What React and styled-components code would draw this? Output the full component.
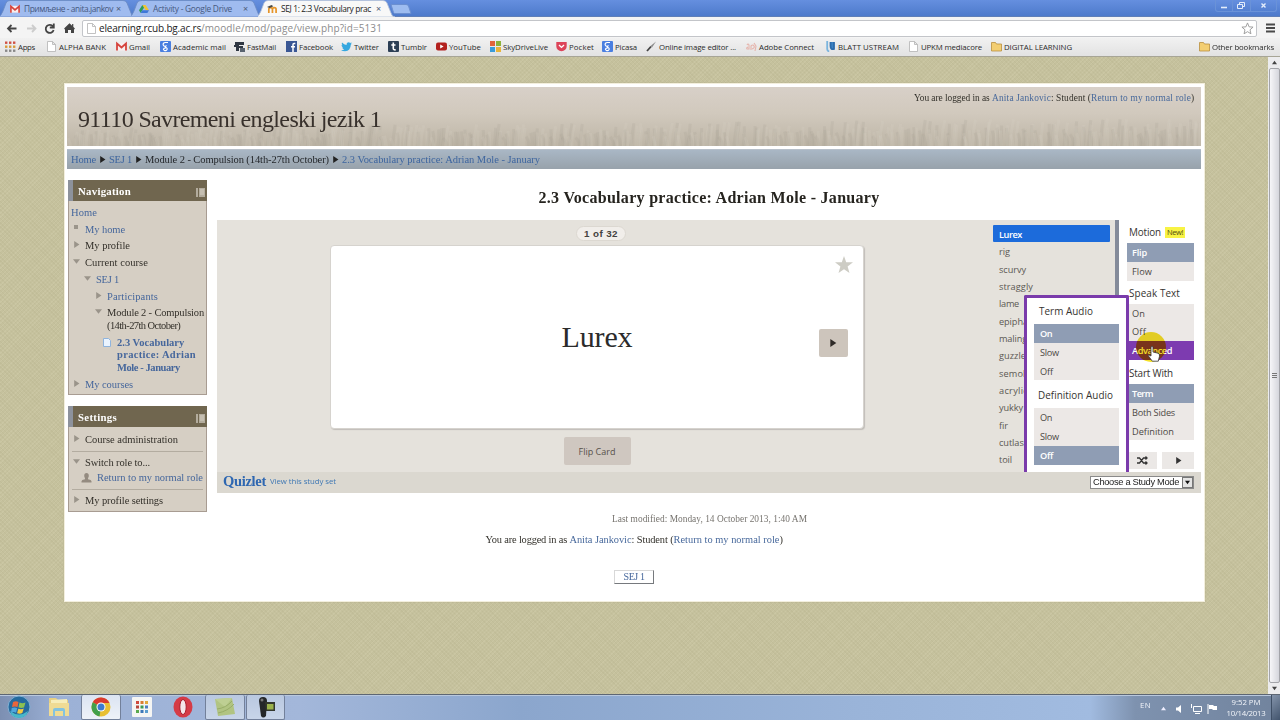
import React, { useLayoutEffect, useRef } from "react";
import styled, { createGlobalStyle } from "styled-components";

const SERIF = `Georgia, "Liberation Serif", serif`;
const UI = `"Segoe UI", "Open Sans", sans-serif`;

const GlobalStyle = createGlobalStyle`
  * { box-sizing: border-box; }
  body {
    margin: 0;
    overflow: hidden;
    font-family: ${SERIF};
    color: #33312b;
  }
`;

const Label = styled.span`
  display: inline-block;
  white-space: pre;
  flex: none;
`;

// tracks the letters in or out so that the label is exactly w wide
function Fit({ w, children }) {
  const ref = useRef(null);
  useLayoutEffect(() => {
    const el = ref.current;
    el.style.letterSpacing = "0px";
    const natural = el.getBoundingClientRect().width;
    el.style.letterSpacing = `${(w - natural) / el.textContent.length}px`;
  }, [w, children]);
  return <Label ref={ref}>{children}</Label>;
}

const Screen = styled.div`
  width: 1280px;
  height: 720px;
  display: flex;
  flex-direction: column;
  overflow: hidden;
`;

/* ---------- browser chrome ---------- */

const TabStrip = styled.div`
  height: 17px;
  flex: none;
  display: flex;
  background: linear-gradient(#658fdf, #4d7acb);
  border-bottom: 1px solid #5f7fb8;
  font-family: ${UI};
`;

const TabBox = styled.div`
  position: relative;
  width: ${(p) => p.$w}px;
  height: 17px;
  display: flex;
  align-items: center;
  padding-left: ${(p) => p.$pad}px;
  font-size: 8.4px;
  color: ${(p) => (p.$active ? "#222" : "#46597f")};
  z-index: ${(p) => (p.$active ? 2 : 1)};
`;

const TabShape = styled.svg`
  position: absolute;
  left: 0;
  top: 0;
  z-index: -1;
`;

const TabText = styled.div`
  margin-left: 4px;
  flex: 1;
  line-height: 16px;
`;

const TabClose = styled.span`
  width: 15px;
  font-size: 9px;
  line-height: 15px;
  color: #4c5a74;
`;

const NewTab = styled.svg`
  margin: 4px 0 0 -2px;
`;

const WindowButtons = styled.div`
  margin-left: auto;
  margin-right: 3px;
  width: 62px;
  height: 12px;
  display: flex;
  border: 1px solid #6a92d8;
  border-top: 0;
  border-radius: 0 0 3px 3px;
`;

const Toolbar = styled.div`
  height: 21px;
  flex: none;
  display: flex;
  align-items: center;
  background: #f4f4f4;
  padding: 0 5px;
`;

const Omnibox = styled.div`
  flex: 1;
  height: 17px;
  margin: 1px 9px 0 1px;
  display: flex;
  align-items: center;
  background: #fff;
  border: 1px solid #c3c5c9;
  border-radius: 2px;
  padding: 0 2px 0 3px;
  font-family: ${UI};
  font-size: 10px;
  color: #222;

  em {
    font-style: normal;
    color: #8b8b8b;
  }
`;

const Url = styled.div`
  flex: 1;
  margin-left: 2px;
  line-height: 15px;
`;

const BookmarkBar = styled.div`
  height: 19px;
  flex: none;
  display: flex;
  align-items: center;
  background: linear-gradient(#f1f1f1, #e2e2e2);
  border-bottom: 1px solid #a7a596;
  padding: 0 0 1px 5px;
  font-family: ${UI};
  font-size: 7.8px;
  color: #2b2b2b;
`;

const BookmarkItem = styled.div`
  width: ${(p) => p.$w}px;
  flex: none;
  display: flex;
  align-items: center;
  line-height: 12px;
  margin-left: ${(p) => (p.$last ? "auto" : 0)};

  svg {
    flex: none;
    margin-right: 2px;
  }
`;

/* ---------- page ---------- */

const Viewport = styled.div`
  flex: 1;
  min-height: 0;
  display: flex;
`;

const Page = styled.div`
  flex: 1;
  padding: 26px 0 0 64px;
  background-color: #c5c19d;
  background-image: repeating-linear-gradient(45deg, rgba(160, 155, 115, 0.12) 0 1px, transparent 1px 3px),
    repeating-linear-gradient(-45deg, rgba(235, 230, 200, 0.14) 0 1px, transparent 1px 3px);
`;

const Scrollbar = styled.div`
  width: 12px;
  display: flex;
  flex-direction: column;
  justify-content: space-between;
  align-items: center;
  background: #ececee;
`;

const ScrollArrow = styled.div`
  width: 12px;
  height: 11px;
  display: flex;
  align-items: center;
  justify-content: center;
`;

const Thumb = styled.div`
  flex: 1;
  width: 11px;
  border: 1px solid #a3a4a9;
  border-radius: 2px;
  background: linear-gradient(90deg, #f6f6f8, #d5d6dc);
  display: flex;
  align-items: center;
  justify-content: center;
`;

const Sheet = styled.div`
  width: 1141px;
  height: 519px;
  background: #fff;
  border: 1px solid #f3efdd;
  box-shadow: 0 0 1px #aaa68a;
  padding: 3px 3px 0 2px;
  display: flex;
  flex-direction: column;
`;

const Header = styled.header`
  position: relative;
  height: 59px;
  width: 1134px;
  flex: none;
  display: flex;
  justify-content: space-between;
  background: linear-gradient(#d8d0c8, #d1c9bd 45%, #bdb5a6);
`;

const Grass = styled.svg`
  position: absolute;
  left: 0;
  bottom: 0;
`;

const CourseName = styled.h1`
  position: relative;
  margin: 18px 0 0 11px;
  font-size: 24px;
  line-height: 28px;
  font-weight: 400;
  color: #38312c;
`;

const LoginInfo = styled.div`
  position: relative;
  margin: ${(p) => p.$margin || 0};
  font-size: ${(p) => p.$size}px;
  line-height: 14px;
  white-space: nowrap;
  color: #33312b;
  text-align: center;
`;

const Link = styled.a`
  color: #48699c;
`;

const Breadcrumb = styled.nav`
  height: 20px;
  width: 1134px;
  flex: none;
  margin-top: 3px;
  display: flex;
  align-items: center;
  padding-left: 4px;
  border-top: 1px solid #b6bfc9;
  background: linear-gradient(#a9b7c5, #98a2ab);
  font-size: 10.5px;
  color: #24272b;

  a {
    color: #3d659f;
  }

  svg {
    margin: 0 3px;
  }
`;

const Columns = styled.div`
  display: flex;
  padding: 11px 0 0 1px;
`;

const Sidebar = styled.aside`
  width: 139px;
  flex: none;
`;

const Block = styled.section`
  height: ${(p) => p.$h}px;
  margin-bottom: 11px;
  border: 1px solid #a89c92;
  background: #d6cfc4;
  font-size: 10.5px;
  line-height: 12.7px;
`;

const BlockTitle = styled.h2`
  height: 21px;
  margin: -1px -1px ${(p) => p.$gap}px;
  padding: 0 2px 0 5px;
  display: flex;
  align-items: center;
  justify-content: space-between;
  border-left: 5px solid #8d929c;
  background: #70664f;
  color: #fff;
  font-size: 10.8px;
  line-height: 18px;

  svg {
    margin-top: 4px;
  }
`;

const TreeRow = styled.div`
  display: flex;
  align-items: flex-start;
  padding: ${(p) => (p.$tight ? 1 : 2)}px 0 2px ${(p) => p.$indent}px;
  color: #33302a;
  font-weight: ${(p) => (p.$bold ? 700 : 400)};
  a {
    color: #46679c;
  }
  svg {
    flex: none;
    margin: 1px 5px 0 -1px;
  }
`;

const TreeText = styled.div`
  display: flex;
  flex-direction: column;
`;

const Rule = styled.div`
  height: 1px;
  margin: ${(p) => p.$m};
  background: #b3aca0;
`;

const Main = styled.main`
  width: 984px;
  margin-left: 10px;
  display: flex;
  flex-direction: column;
`;

const Title = styled.h3`
  margin: 9px 0 13px;
  font-size: 16px;
  line-height: 18px;
  text-align: center;
  color: #25231e;
`;

/* ---------- flashcards ---------- */

const Flashcards = styled.div`
  position: relative;
  height: 252px;
  display: flex;
  background: #e5e2dc;
  font-family: ${UI};
`;

const Stage = styled.div`
  width: 760px;
  display: flex;
  flex-direction: column;
  align-items: center;
  padding-top: 6px;
`;

const Counter = styled.div`
  width: 50px;
  height: 15px;
  margin-left: 8px;
  border: 1px solid #dcd8d1;
  border-radius: 8px;
  background: #f1eeea;
  text-align: center;
  font: 700 9.8px/14px "Liberation Sans", Arial, sans-serif;
  color: #44423e;
`;

const Card = styled.div`
  width: 534px;
  height: 184px;
  margin-top: 4px;
  display: grid;
  grid-template-columns: 44px 1fr 44px;
  justify-items: center;
  border: 1px solid #d6d3ce;
  border-radius: 4px;
  background: #fff;
  box-shadow: 1px 1px 1px #c0bdb8;
`;

const Word = styled.div`
  align-self: center;
  font: 30px/34px ${SERIF};
  color: #2b2b2b;
`;

const CardTools = styled.div`
  width: 29px;
  margin-right: 16px;
  display: flex;
  flex-direction: column;
  align-items: flex-end;
  padding-top: 10px;
`;

const Star = styled.svg`
  margin-right: -5px;
`;

const NextButton = styled.button`
  width: 29px;
  height: 28px;
  margin-top: 55px;
  padding: 0;
  border: 0;
  border-radius: 2px;
  background: #cdc5bc;
  display: flex;
  align-items: center;
  justify-content: center;
`;

const FlipButton = styled.button`
  width: 67px;
  height: 28px;
  margin-top: 8px;
  padding: 0;
  border: 0;
  border-radius: 2px;
  background: #cfc7c0;
  font: 9px/29px ${UI};
  color: #57514b;
`;

const TermList = styled.div`
  width: 138px;
  flex: none;
  padding: 5px 5px 0 16px;
`;

const TermItem = styled.div`
  height: 17.35px;
  padding-left: 6px;
  line-height: 19px;
  font-size: 9.2px;
  font-weight: ${(p) => (p.$selected ? 600 : 400)};
  color: ${(p) => (p.$selected ? "#fff" : "#5b5853")};
  background: ${(p) => (p.$selected ? "#1c6bdb" : "transparent")};
  border-radius: 1px;
`;

const Options = styled.div`
  width: 86px;
  flex: none;
  padding: 5px 7px 0 8px;
  border-left: 4px solid #848b9a;
  background: #fff;
`;

const OptionTitle = styled.div`
  height: 14px;
  margin: ${(p) => p.$m};
  display: flex;
  align-items: center;
  font-size: 9.9px;
  line-height: 14px;
  color: #35332f;
`;

const NewBadge = styled.span`
  margin-left: 4px;
  padding: 0 2px;
  background: #f8f344;
  font-size: 7.5px;
  line-height: 11px;
  color: #4f4a10;
`;

const OptionGroup = styled.div`
  display: flex;
  flex-direction: column;
  background: #ece8e6;
`;

const Option = styled.div`
  height: 18.8px;
  padding-left: 5px;
  line-height: 20px;
  font-size: 9.2px;
  font-weight: ${(p) => (p.$tone ? 600 : 400)};
  color: ${(p) => (p.$tone ? "#fff" : "#4c4945")};
  background: ${(p) => p.$tone || "transparent"};
`;

const PlayRow = styled.div`
  display: flex;
  justify-content: space-between;
  margin-top: 12px;
`;

const PlayButton = styled.button`
  width: ${(p) => p.$w}px;
  height: 17px;
  padding: 0;
  border: 0;
  background: #ebe8e6;
  display: flex;
  align-items: center;
  justify-content: center;
`;

const AudioPopup = styled.div`
  position: absolute;
  left: 807px;
  top: 75px;
  width: 105px;
  height: 177px;
  padding: 6px 7px 0 7px;
  border: 3px solid #7a3bab;
  border-bottom: 0;
  border-radius: 2px 2px 0 0;
  background: #fff;

  ${Option} {
    padding-left: 6px;
  }
`;

const Pointer = styled.svg`
  position: absolute;
  left: 916px;
  top: 108px;

  circle {
    mix-blend-mode: multiply;
  }
`;

const QuizletBar = styled.div`
  height: 21px;
  padding: 0 7px 0 6px;
  display: flex;
  align-items: center;
  background: #dbd8d0;
  color: #3a70b8;
`;

const QuizletLogo = styled.span`
  font: 700 14.5px/18px ${SERIF};
  color: #2e67b1;
  margin-top: -4px;
`;

const StudyLink = styled.a`
  flex: 1;
  margin: -4px 0 0 4px;
  font: 7.8px/12px ${UI};
  color: #3f78b4;
`;

const StudyMode = styled.div`
  width: 104px;
  height: 13px;
  display: flex;
  align-items: center;
  justify-content: space-between;
  padding-left: 2px;
  border: 1px solid #8a8a8a;
  background: #fff;
  font: 9.3px/11px "Liberation Sans", Arial, sans-serif;
  color: #222;
`;

const SelectArrow = styled.span`
  width: 11px;
  height: 11px;
  display: flex;
  align-items: center;
  justify-content: center;
  border: 1px solid #777;
  background: #e4e4e4;
`;

const Modified = styled.div`
  margin: 19px 0 0 395px;
  font-size: 9.4px;
  line-height: 14px;
  color: #77746f;
`;

const Footer = styled.footer`
  display: flex;
  flex-direction: column;
  align-items: center;
`;

const HomeLink = styled.a`
  width: 40px;
  height: 14px;
  margin-top: 23px;
  border: 1px solid #d8d8d8;
  border-right-color: #76797d;
  border-bottom-color: #76797d;
  text-align: center;
  font-size: 10px;
  line-height: 12px;
  color: #46679c;
`;

/* ---------- taskbar ---------- */

const Taskbar = styled.div`
  height: 26px;
  flex: none;
  display: flex;
  border-top: 1px solid #5d6673;
  box-shadow: inset 0 1px 0 #b9c8dd;
  background: linear-gradient(90deg, #7c8fb2 0, #9cb1d6 60px, #a3b7da 300px, #8ba6cd 520px, #9ab4d9 860px, #a1bbe0 1090px, #7e92af 1135px, #71839d 1280px);
`;

const TaskButton = styled.div`
  width: ${(p) => p.$w}px;
  margin-right: ${(p) => (p.$open ? 1 : 2)}px;
  display: flex;
  align-items: center;
  justify-content: center;
  border: 1px solid ${(p) => (p.$open ? "#72809a" : "transparent")};
  border-top: 0;
  border-radius: 2px;
  background: ${(p) => (p.$active ? "linear-gradient(#dbe4f2, #eef2f8)" : p.$open ? "linear-gradient(#b9c8e0, #c8d5e9)" : "none")};
`;

const Tray = styled.div`
  margin-left: auto;
  display: flex;
  align-items: center;
  color: #f2f5fa;
  font: 7.8px/11px ${UI};
`;

const Language = styled.div`
  margin: -4px 10px 0 0;
`;

const TrayIcon = styled.div`
  display: flex;
  margin: 2px ${(p) => p.$gap}px 0 0;
`;

const Clock = styled.div`
  width: 50px;
  text-align: center;
`;

const ShowDesktop = styled.div`
  width: 9px;
  height: 25px;
  border-left: 1px solid #3f4f66;
  background: linear-gradient(135deg, #8494ab, #42546d);
`;

/* ---------- icons ---------- */

const icons = {
  apps: (
    <g>
      {[0, 1, 2].map((r) =>
        [0, 1, 2].map((c) => (
          <rect key={`${r}${c}`} x={c * 4} y={r * 4 + 0.5} width="2.4" height="2.4" fill={["#cf5145", "#d99a39", "#888"][r]} />
        ))
      )}
    </g>
  ),
  page: <path d="M1.5 .5h5l3 3v7h-8zM6.5.5v3h3" fill="#fff" stroke="#b3b3b3" strokeWidth=".8" />,
  gmail: (
    <g>
      <path d="M0 2h11v7.5H0z" fill="#f8eeee" />
      <path d="M1 9.5V2.5l4.5 4 4.5-4v7" fill="none" stroke="#d5433c" strokeWidth="1.8" />
    </g>
  ),
  google: (
    <g>
      <rect width="11" height="11" rx="1" fill="#4a7fe0" />
      <path d="M8 1.5H5.400a2 1.900 0 1 0 .3 3.700q-.6.9.6 1.500a1.900 1.600 0 1 1-2.900 1.400q.4-1.300 2.400-1.300" fill="none" stroke="#fff" strokeWidth="1.2" />
    </g>
  ),
  fastmail: (
    <g>
      <path d="M1 1h9v3H5v1h4v2H5v3H2V6H0V4h1z" fill="#2f3742" />
      <path d="M6 7h5v4H6z" fill="#59636f" />
    </g>
  ),
  facebook: (
    <g>
      <rect width="11" height="11" fill="#3a5794" />
      <path d="M9.3 2.5H8q-1 0-1 1V11M5 5.8h4" fill="none" stroke="#fff" strokeWidth="1.5" />
    </g>
  ),
  twitter: (
    <path d="M0 9q2 .3 3.2-.8Q1.500 8 1.200 6.500h1Q.5 5.800.5 4l1 .3Q.2 3 1 1.500 3 3.800 5.500 3.900 5.300 1.300 7.500 1.200q1 0 1.700.7l1.500-.6-1 1.400 1.300-.3-1.200 1.300Q9.600 9.800 4 10.200 1.600 10.200 0 9z" fill="#35a7df" />
  ),
  tumblr: (
    <g>
      <rect width="11" height="11" rx="1" fill="#2c3f55" />
      <path d="M5.3 1.5v6q0 1.6 2.4 1.3M3.3 4h4.2" fill="none" stroke="#fff" strokeWidth="1.6" />
    </g>
  ),
  youtube: (
    <g>
      <rect y="1.5" width="11" height="8" rx="2" fill="#b3211e" />
      <path d="M4.2 3.5v4l3.4-2z" fill="#fff" />
    </g>
  ),
  windows: (
    <g>
      <path d="M0 0h5v5H0z" fill="#e2653a" />
      <path d="M6 0h5v5H6z" fill="#8cb33a" />
      <path d="M0 6h5v5H0z" fill="#3b9cd9" />
      <path d="M6 6h5v5H6z" fill="#e9b53a" />
    </g>
  ),
  pocket: (
    <g>
      <path d="M.3 1h10.4v4.300a5.200 5 0 0 1-10.400 0z" fill="#dd4459" />
      <path d="M3 4l2.500 2.400L8 4" fill="none" stroke="#fff" strokeWidth="1.4" />
    </g>
  ),
  brush: (
    <g>
      <path d="M1 10L5 5.500" stroke="#444" strokeWidth="1.8" />
      <path d="M4.500 5L10 .5 6 6.500z" fill="#8b8b8b" />
    </g>
  ),
  adobe: <path d="M1 4q1-2 2 0v4H1q-1-1 1-2M5 9V5q2-2 3 0t-2 3M8 2l2 3-1 5" fill="none" stroke="#e6b4ac" strokeWidth="1.1" />,
  ustream: (
    <g fill="none" strokeWidth="1.8">
      <path d="M2.200 0v8q0 2 2 2.500" stroke="#7bb4dd" />
      <path d="M5.500 1v4q0 4 3.500 3V1" stroke="#2d6cac" fill="#3d83c2" />
    </g>
  ),
  folder: <path d="M.5 1.5h4l1 1.5h5v7H.5z" fill="#f3ce72" stroke="#b98f3f" strokeWidth=".8" />,
  drive: (
    <g>
      <path d="M3.700 1h3.600L11 7H7.400z" fill="#f2c330" />
      <path d="M3.700 1L0 7l1.800 3 3.700-6z" fill="#2f9c57" />
      <path d="M1.800 10h7.400L11 7H3.600z" fill="#3f78d8" />
    </g>
  ),
  moodle: (
    <g fill="none" strokeWidth="1.9">
      <path d="M2 10V6q0-2 2-2t2 2v4M6 6q0-2 2-2t2 2v4" stroke="#e69529" />
      <path d="M0 3.400L5 1l2 1.500-4 2z" fill="#4b4b45" stroke="none" />
    </g>
  ),
};

const Icon = ({ name, size = 11 }) => (
  <svg width={size} height={size} viewBox="0 0 11 11">
    {icons[name]}
  </svg>
);

const Triangle = ({ dir = "right", size = 6, fill = "#9a948a" }) => (
  <svg width={size} height={size} viewBox="0 0 6 6">
    <path d={{ right: "M1 0l4.500 3-4.500 3z", down: "M0 1h6L3 5z", up: "M0 5h6L3 1z" }[dir]} fill={fill} />
  </svg>
);

const DockIcon = () => (
  <svg width="9" height="9" viewBox="0 0 9 9">
    <path d="M0 0h2v9H0zM3 0h6v9H3z" fill="#b3ac9d" />
    <path d="M4 2h4M4 4h4M4 6h4" stroke="#d6d0c4" />
  </svg>
);

const UserIcon = () => (
  <svg width="11" height="10" viewBox="0 0 11 11" fill="#948b80">
    <ellipse cx="5.5" cy="3" rx="2.5" ry="3" />
    <path d="M0 10.5V9q0-1.300 3.800-2V5h3.400v2Q11 7.700 11 9v1.500z" />
  </svg>
);

const bookmarks = [
  ["apps", "Apps", 17, 41],
  ["page", "ALPHA BANK", 47, 70],
  ["gmail", "Gmail", 21, 44],
  ["google", "Academic mail", 53, 74],
  ["fastmail", "FastMail", 29, 52],
  ["facebook", "Facebook", 34, 55],
  ["twitter", "Twitter", 25, 47],
  ["tumblr", "Tumblr", 26, 48],
  ["youtube", "YouTube", 32, 54],
  ["windows", "SkyDriveLive", 45, 66],
  ["pocket", "Pocket", 25, 46],
  ["google", "Picasa", 22, 44],
  ["brush", "Online image editor ...", 77, 100],
  ["adobe", "Adobe Connect", 55, 79],
  ["ustream", "BLATT USTREAM", 61, 83],
  ["page", "UPKM mediacore", 61, 83],
  ["folder", "DIGITAL LEARNING", 68, 90],
];

const terms = [
  ["Lurex", 23], ["rig", 11], ["scurvy", 27], ["straggly", 34], ["lame", 20], ["epipha", 29], ["maling", 28],
  ["guzzle", 27], ["semoli", 29], ["acrylic", 29], ["yukky", 24], ["fir", 9], ["cutlass", 29], ["toil", 13],
];

// pale blades along the foot of the header
const blades = Array.from({ length: 420 }, (_, i) => {
  const rnd = Math.abs(Math.sin(i * 78.233) * 43758.5453) % 1;
  const rnd2 = Math.abs(Math.sin(i * 12.9898) * 24634.6345) % 1;
  const x = i * 2.7 + rnd * 4;
  const h = (10 + rnd2 * 18) * (0.65 + x / 3000);
  return { d: `M${x} 40q${rnd * 3 - 1} ${-h / 2} ${rnd2 * 6 - 3} ${-h}`, dark: rnd > 0.5 };
});

function Tab({ width, pad, icon, title, textWidth, active }) {
  return (
    <TabBox $w={width} $pad={pad} $active={active}>
      <TabShape width={width + 4} height="17">
        <path
          d={`M-3 17Q1 17 3 11L6 3Q7 .5 10 .5H${width - 8}Q${width - 5} .5 ${width - 4} 3L${width} 13Q${width + 1} 17 ${width + 4} 17z`}
          fill={active ? "#f8f8f8" : "#9fbbef"}
          stroke={active ? "#b4c2d8" : "#6989c2"}
          strokeWidth=".8"
        />
      </TabShape>
      <Icon name={icon} size={10} />
      <TabText><Fit w={textWidth}>{title}</Fit></TabText>
      <TabClose>×</TabClose>
    </TabBox>
  );
}

function Browser() {
  return (
    <>
      <TabStrip>
        <Tab width={131} pad={10} icon="gmail" title="Примљене - anita.jankov" textWidth={89} />
        <Tab width={127} pad={8} icon="drive" title="Activity - Google Drive" textWidth={79} />
        <Tab width={133} pad={9} icon="moodle" title="SEJ 1: 2.3 Vocabulary prac" textWidth={90} active />
        <NewTab width="24" height="11">
          <path d="M2 .5h15q2 0 2.500 1.500L22 9.500H6q-1 0-1.500-1z" fill="#9dbcf0" stroke="#6b8fd0" />
        </NewTab>
        <WindowButtons>
          <svg width="60" height="11" fill="none" stroke="#e4edfb">
            <path d="M5 7.500h6" strokeWidth="1.600" />
            <path d="M21.500 4.500h5v4h-5zM23.500 4V2.500h5v4H27" />
            <path d="M45.500 3.500l4 4M49.500 3.500l-4 4" strokeWidth="1.400" />
            <path d="M16.500 0v11M34.500 0v11" stroke="#6a92d8" />
          </svg>
        </WindowButtons>
      </TabStrip>
      <Toolbar>
        <svg width="76" height="16" viewBox="0 0 76 16" fill="none" stroke="#444" strokeWidth="1.800">
          <path d="M11.500 8.500H3M6.500 5L3 8.500 6.500 12" />
          <path d="M22 8.500h8.500M27 5l3.500 3.500L27 12" stroke="#ccc" />
          <path d="M48 6.500A4 4 0 1 0 48.600 10M48.800 3.500V7.500H44.800" />
          <path d="M60 8.500l4.500-4.500L69 8.500v4.500h-3v-3h-3v3h-3zM67.500 4v3" fill="#444" stroke="none" />
          <path d="M59.500 9L64.500 4.200 69.500 9M67.700 4v3" strokeWidth="1.200" />
        </svg>
        <Omnibox>
          <Icon name="page" />
          <Url>
            <Fit w={102}>elearning.rcub.bg.ac.rs</Fit>
            <em><Fit w={181}>/moodle/mod/page/view.php?id=5131</Fit></em>
          </Url>
          <svg width="13" height="13" viewBox="0 0 14 14">
            <path d="M7 1l1.700 4.200 4.300.3-3.300 2.900 1 4.300L7 10.400l-3.700 2.300 1-4.300L1 5.500l4.300-.3z" fill="#fff" stroke="#999" />
          </svg>
        </Omnibox>
        <svg width="9" height="10"><path d="M0 1.500h9M0 5h9M0 8.500h9" stroke="#4a4a4a" strokeWidth="2" /></svg>
      </Toolbar>
      <BookmarkBar>
        {bookmarks.map(([icon, name, textWidth, width]) => (
          <BookmarkItem key={name} $w={width}>
            <Icon name={icon} />
            <Fit w={textWidth}>{name}</Fit>
          </BookmarkItem>
        ))}
        <BookmarkItem $w={81} $last>
          <Icon name="folder" />
          <Fit w={62}>Other bookmarks</Fit>
        </BookmarkItem>
      </BookmarkBar>
    </>
  );
}

const PageHeader = () => (
  <>
    <Header>
      <Grass width="1134" height="40">
        {blades.map((b, i) => (
          <path key={i} d={b.d} fill="none" stroke={b.dark ? "#a39b8c" : "#d9d3c9"} strokeWidth="3" opacity=".17" />
        ))}
      </Grass>
      <CourseName><Fit w={303}>91110 Savremeni engleski jezik 1</Fit></CourseName>
      <LoginInfo $size={9.4} $margin="4px 7px 0 0">
        <Fit w={78}>You are logged in as </Fit>
        <Link><Fit w={59}>Anita Jankovic</Fit></Link>
        <Fit w={40}>: Student (</Fit>
        <Link><Fit w={100}>Return to my normal role</Fit></Link>
        <Fit w={3}>)</Fit>
      </LoginInfo>
    </Header>
    <Breadcrumb>
      <a><Fit w={25}>Home</Fit></a>
      <Triangle size={7} fill="#222" />
      <a><Fit w={23}>SEJ 1</Fit></a>
      <Triangle size={7} fill="#222" />
      <Fit w={184}>Module 2 - Compulsion (14th-27th October)</Fit>
      <Triangle size={7} fill="#222" />
      <a><Fit w={198}>2.3 Vocabulary practice: Adrian Mole - January</Fit></a>
    </Breadcrumb>
  </>
);

const SideBlocks = () => (
  <Sidebar>
    <Block $h={215}>
      <BlockTitle $gap={4}><Fit w={53}>Navigation</Fit><DockIcon /></BlockTitle>
      <TreeRow $indent={2}><a><Fit w={26}>Home</Fit></a></TreeRow>
      <TreeRow $indent={5}>
        <svg width="7" height="6"><rect x="1" y="0" width="4" height="4" fill="#9b958b" /></svg>
        <a><Fit w={40}>My home</Fit></a>
      </TreeRow>
      <TreeRow $indent={5}><Triangle size={7} /><Fit w={45}>My profile</Fit></TreeRow>
      <TreeRow $indent={5}><Triangle dir="down" size={7} /><Fit w={63}>Current course</Fit></TreeRow>
      <TreeRow $indent={16}><Triangle dir="down" size={7} /><a><Fit w={23}>SEJ 1</Fit></a></TreeRow>
      <TreeRow $indent={27}><Triangle size={7} /><a><Fit w={51}>Participants</Fit></a></TreeRow>
      <TreeRow $indent={27}>
        <Triangle dir="down" size={7} />
        <TreeText>
          <Fit w={97}>Module 2 - Compulsion</Fit>
          <Fit w={86}>(14th-27th October)</Fit>
        </TreeText>
      </TreeRow>
      <TreeRow $indent={34} $bold>
        <svg width="10" height="10" viewBox="0 0 10 10">
          <path d="M1.500.5h5l2 2v6h-7z" fill="#eaf4ff" stroke="#8fb4dd" />
        </svg>
        <a>
          <TreeText>
            <Fit w={74}>2.3 Vocabulary</Fit>
            <Fit w={79}>practice: Adrian</Fit>
            <Fit w={73}>Mole - January</Fit>
          </TreeText>
        </a>
      </TreeRow>
      <TreeRow $indent={5}><Triangle size={7} /><a><Fit w={48}>My courses</Fit></a></TreeRow>
    </Block>
    <Block $h={106}>
      <BlockTitle $gap={5}><Fit w={39}>Settings</Fit><DockIcon /></BlockTitle>
      <TreeRow $indent={5}><Triangle size={7} /><Fit w={93}>Course administration</Fit></TreeRow>
      <Rule $m="2px 3px 3px" />
      <TreeRow $indent={5}><Triangle dir="down" size={7} /><Fit w={65}>Switch role to...</Fit></TreeRow>
      <TreeRow $indent={13} $tight><UserIcon /><a><Fit w={106}>Return to my normal role</Fit></a></TreeRow>
      <Rule $m="2px 3px 3px" />
      <TreeRow $indent={5}><Triangle size={7} /><Fit w={78}>My profile settings</Fit></TreeRow>
    </Block>
  </Sidebar>
);

const SLATE = "#8f9db4";

const FlashcardPlayer = () => (
  <Flashcards>
    <Stage>
      <Counter><Fit w={34}>1 of 32</Fit></Counter>
      <Card>
        <span />
        <Word><Fit w={71}>Lurex</Fit></Word>
        <CardTools>
          <Star width="18" height="18" viewBox="0 0 18 18">
            <path d="M9 0l2.200 6.300H18l-5.400 4.200L14.500 17 9 13.200 3.500 17l1.900-6.500L0 6.300h6.800z" fill="#cdccc4" />
          </Star>
          <NextButton><Triangle size={8} fill="#2f2b28" /></NextButton>
        </CardTools>
      </Card>
      <FlipButton><Fit w={37}>Flip Card</Fit></FlipButton>
    </Stage>
    <TermList>
      {terms.map(([term, width], i) => (
        <TermItem key={term} $selected={i === 0}><Fit w={width}>{term}</Fit></TermItem>
      ))}
    </TermList>
    <Options>
      <OptionTitle $m="0 0 4px 2px"><Fit w={32}>Motion</Fit><NewBadge><Fit w={16}>New!</Fit></NewBadge></OptionTitle>
      <OptionGroup>
        <Option $tone={SLATE}><Fit w={15}>Flip</Fit></Option>
        <Option><Fit w={20}>Flow</Fit></Option>
      </OptionGroup>
      <OptionTitle $m="5px 0 4px 2px"><Fit w={51}>Speak Text</Fit></OptionTitle>
      <OptionGroup>
        <Option><Fit w={13}>On</Fit></Option>
        <Option><Fit w={14}>Off</Fit></Option>
        <Option $tone="#7d3bb0"><Fit w={40}>Advanced</Fit></Option>
      </OptionGroup>
      <OptionTitle $m="6px 0 4px 2px"><Fit w={44}>Start With</Fit></OptionTitle>
      <OptionGroup>
        <Option $tone={SLATE}><Fit w={21}>Term</Fit></Option>
        <Option><Fit w={43}>Both Sides</Fit></Option>
        <Option><Fit w={42}>Definition</Fit></Option>
      </OptionGroup>
      <PlayRow>
        <PlayButton $w={30}>
          <svg width="11" height="9" fill="none" stroke="#333" strokeWidth="1.300">
            <path d="M0 2h2.500l4 5H10M0 7h2.500l4-5H10M8.500.5L10 2 8.500 3.500M8.500 5.500L10 7 8.500 8.500" />
          </svg>
        </PlayButton>
        <PlayButton $w={32}><Triangle size={7} fill="#333" /></PlayButton>
      </PlayRow>
    </Options>
    <AudioPopup>
      <OptionTitle $m="0 0 6px 5px"><Fit w={54}>Term Audio</Fit></OptionTitle>
      <OptionGroup>
        <Option $tone={SLATE}><Fit w={12}>On</Fit></Option>
        <Option><Fit w={19}>Slow</Fit></Option>
        <Option><Fit w={13}>Off</Fit></Option>
      </OptionGroup>
      <OptionTitle $m="8px 0 6px 4px"><Fit w={75}>Definition Audio</Fit></OptionTitle>
      <OptionGroup>
        <Option><Fit w={12}>On</Fit></Option>
        <Option><Fit w={19}>Slow</Fit></Option>
        <Option $tone={SLATE}><Fit w={13}>Off</Fit></Option>
      </OptionGroup>
    </AudioPopup>
    <Pointer width="38" height="38" viewBox="0 0 38 38">
      <circle cx="18" cy="19" r="15" fill="#f3dc00" opacity=".85" />
      <path d="M18 19q1-1.500 2 0v5l5 1.200q2 .8 1.500 3l-1.200 5h-6l-4-5.500q0-1.500 2.700.3z" fill="#fff" stroke="#333" strokeWidth=".8" />
    </Pointer>
  </Flashcards>
);

const DesktopBar = () => (
  <Taskbar>
    <TaskButton $w={37}>
      <svg width="24" height="24" viewBox="0 0 24 24">
        <circle cx="12" cy="12" r="11" fill="#256a9e" stroke="#7fb0d4" />
        <path d="M3 16q9 7 18 0-2 7-9 7t-9-7z" fill="#48b7c9" />
        <path d="M6 7q3-1.500 5.500 0L10.500 12Q8 10.800 5 12z" fill="#e8663c" />
        <path d="M12.500 7.500q3 1.500 6 0L17 12.500q-3 1-5.500-.3z" fill="#8cc152" />
        <path d="M4.700 13q3-1.200 5.500.2L9 17.700q-2.500-1.200-5 .1z" fill="#4fa6dd" />
        <path d="M11.300 13.700q3 1 5.500-.2l-1.500 4.500q-2.500 1.200-5.200.2z" fill="#f4c93f" />
      </svg>
    </TaskButton>
    <TaskButton $w={40}>
      <svg width="24" height="22" viewBox="0 0 24 22">
        <path d="M2 2h7l2 2h10v15H2z" fill="#e6cf82" />
        <path d="M4 4l16-1v15H4z" fill="#f6edba" />
        <path d="M2 7h20v13H2z" fill="#efdb94" />
        <path d="M6 20v-6q0-2 2-2h8q2 0 2 2v6h-2v-5H8v5z" fill="#83c3df" />
      </svg>
    </TaskButton>
    <TaskButton $w={40} $open $active>
      <svg width="20" height="20" viewBox="0 0 20 20">
        <circle cx="10" cy="10" r="9.500" fill="#e8bf32" />
        <path d="M10 10L1.800 5.200A9.500 9.500 0 0 1 18.500 6H10z" fill="#d93a2f" />
        <path d="M10 10L8.500 19.400A9.500 9.500 0 0 1 1.800 5.200z" fill="#42a04b" />
        <circle cx="10" cy="10" r="4.500" fill="#fff" />
        <circle cx="10" cy="10" r="3.500" fill="#3c7bd0" />
      </svg>
    </TaskButton>
    <TaskButton $w={39}>
      <svg width="20" height="20" viewBox="0 0 20 20">
        <rect width="20" height="20" rx="1" fill="#f5f5f3" />
        {["#d04a3c", "#d97d32", "#e0a83c", "#b8473b", "#3e9a55", "#4d7ec2", "#5aa84d", "#3d78b8", "#5b9dce"].map((c, i) => (
          <rect key={i} x={4 + (i % 3) * 4.5} y={4 + Math.floor(i / 3) * 4.5} width="3" height="3" fill={c} />
        ))}
      </svg>
    </TaskButton>
    <TaskButton $w={40}>
      <svg width="20" height="22" viewBox="0 0 20 22">
        <ellipse cx="10" cy="11" rx="9.500" ry="10.500" fill="#d53b46" />
        <ellipse cx="10" cy="11" rx="3.200" ry="7.500" fill="#f5e7e9" stroke="#a81e2b" />
      </svg>
    </TaskButton>
    <TaskButton $w={40} $open>
      <svg width="22" height="20" viewBox="0 0 22 20">
        <path d="M1 2l17-1 3 16-17 2z" fill="#b1c482" />
        <path d="M1 2l17-1-7 9z" fill="#becf93" />
        <path d="M3 12q9-1 15-8M4 16q10-2 16-9" fill="none" stroke="#98ad68" />
      </svg>
    </TaskButton>
    <TaskButton $w={39} $open>
      <svg width="22" height="22" viewBox="0 0 22 22">
        <path d="M4 5q0-4 4-4t4 4l-1 15q-3 3-5 0z" fill="#252729" />
        <path d="M10 6h10v9h-9z" fill="#33372d" />
        <path d="M12 8h6.500v5.500H12z" fill="#9bb24b" />
        <circle cx="7" cy="4" r="1.500" fill="#777" />
      </svg>
    </TaskButton>
    <Tray>
      <Language><Fit w={11}>EN</Fit></Language>
      <TrayIcon $gap={8}><Triangle dir="up" size={5} fill="#eef" /></TrayIcon>
      <TrayIcon $gap={7}>
        <svg width="10" height="10" viewBox="0 0 10 10"><path d="M2 3.500h2L7 1v8L4 6.500H2z" fill="#fff" /></svg>
      </TrayIcon>
      <TrayIcon $gap={5}>
        <svg width="11" height="10" viewBox="0 0 11 10" fill="none" stroke="#fff">
          <path d="M2.500 2.500h8v5h-8zM4 9.500h5M.5 0v4" />
        </svg>
      </TrayIcon>
      <TrayIcon $gap={4}>
        <svg width="10" height="10" viewBox="0 0 10 10"><path d="M1 0v10" stroke="#fff" /><path d="M2 1h4l1 1h3v4H6L5 5H2z" fill="#fff" /></svg>
      </TrayIcon>
      <Clock>
        <div><Fit w={29}>9:52 PM</Fit></div>
        <div><Fit w={39}>10/14/2013</Fit></div>
      </Clock>
      <ShowDesktop />
    </Tray>
  </Taskbar>
);

export default function App() {
  return (
    <Screen>
      <GlobalStyle />
      <Browser />
      <Viewport>
        <Page>
          <Sheet>
            <PageHeader />
            <Columns>
              <SideBlocks />
              <Main>
                <Title><Fit w={341}>2.3 Vocabulary practice: Adrian Mole - January</Fit></Title>
                <FlashcardPlayer />
                <QuizletBar>
                  <QuizletLogo><Fit w={43}>Quizlet</Fit></QuizletLogo>
                  <StudyLink><Fit w={66}>View this study set</Fit></StudyLink>
                  <StudyMode>
                    <Fit w={86}>Choose a Study Mode</Fit>
                    <SelectArrow><Triangle dir="down" size={5} fill="#111" /></SelectArrow>
                  </StudyMode>
                </QuizletBar>
                <Modified><Fit w={195}>Last modified: Monday, 14 October 2013, 1:40 AM</Fit></Modified>
              </Main>
            </Columns>
            <Footer>
              <LoginInfo $size={10.4} $margin="7px 0 0">
                <Fit w={84}>You are logged in as </Fit>
                <Link><Fit w={62}>Anita Jankovic</Fit></Link>
                <Fit w={42}>: Student (</Fit>
                <Link><Fit w={106}>Return to my normal role</Fit></Link>
                <Fit w={3}>)</Fit>
              </LoginInfo>
              <HomeLink><Fit w={21}>SEJ 1</Fit></HomeLink>
            </Footer>
          </Sheet>
        </Page>
        <Scrollbar>
          <ScrollArrow><Triangle dir="up" size={5} fill="#444" /></ScrollArrow>
          <Thumb><svg width="5" height="6"><path d="M0 .5h5M0 2.500h5M0 4.500h5" stroke="#777" /></svg></Thumb>
          <ScrollArrow><Triangle dir="down" size={5} fill="#444" /></ScrollArrow>
        </Scrollbar>
      </Viewport>
      <DesktopBar />
    </Screen>
  );
}
